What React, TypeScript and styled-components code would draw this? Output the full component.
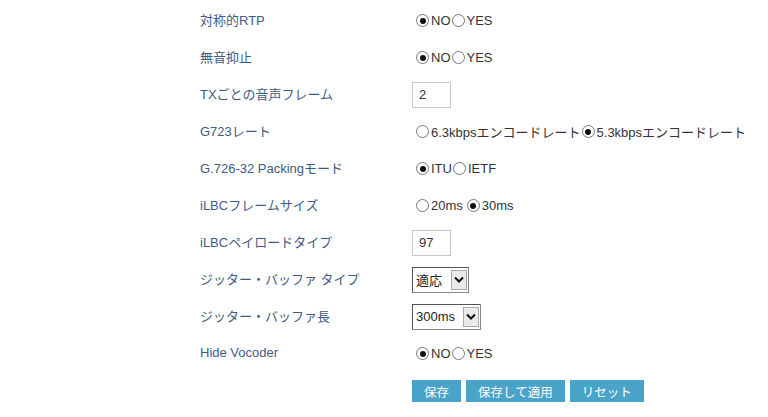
import React, { useState } from "react";
import styled, { createGlobalStyle } from "styled-components";

const GlobalStyle = createGlobalStyle`
  html, body {
    margin: 0;
    padding: 0;
    background: #fff;
  }
  body {
    font-family: "Liberation Sans", Arial, "Noto Sans CJK JP", sans-serif;
    font-size: 13px;
    color: #333;
  }
`;

type Field =
  | { label: string; kind: "radio"; options: string[]; value: number; spaced?: boolean }
  | { label: string; kind: "text"; value: string }
  | { label: string; kind: "select"; options: string[]; value: string; width: number };

const fields: Field[] = [
  { label: "対称的RTP", kind: "radio", options: ["NO", "YES"], value: 0 },
  { label: "無音抑止", kind: "radio", options: ["NO", "YES"], value: 0 },
  { label: "TXごとの音声フレーム", kind: "text", value: "2" },
  { label: "G723レート", kind: "radio", options: ["6.3kbpsエンコードレート", "5.3kbpsエンコードレート"], value: 1 },
  { label: "G.726-32 Packingモード", kind: "radio", options: ["ITU", "IETF"], value: 0 },
  { label: "iLBCフレームサイズ", kind: "radio", options: ["20ms", "30ms"], value: 1, spaced: true },
  { label: "iLBCペイロードタイプ", kind: "text", value: "97" },
  { label: "ジッター・バッファ タイプ", kind: "select", options: ["適応", "固定"], value: "適応", width: 57 },
  { label: "ジッター・バッファ長", kind: "select", options: ["300ms", "200ms", "100ms"], value: "300ms", width: 69 },
  { label: "Hide Vocoder", kind: "radio", options: ["NO", "YES"], value: 0 },
];

const Page = styled.div`
  padding: 2px 0 0 200px;
`;

const Form = styled.div`
  display: grid;
  grid-template-columns: 212px auto;
  grid-auto-rows: 37px;
  align-items: center;
`;

const Label = styled.div`
  color: #3f5b82;
  font-size: 13px;
  white-space: nowrap;
  margin-top: -2px;
`;

const Control = styled.div`
  display: flex;
  align-items: center;
`;

const RadioGroup = styled.div<{ $spaced?: boolean }>`
  display: flex;
  align-items: center;
  gap: ${(p) => (p.$spaced ? "4px" : "1px")};
  padding-left: 4px;
`;

const RadioItem = styled.label`
  display: flex;
  align-items: center;
  gap: 2px;
  cursor: pointer;
  color: #333;
  white-space: nowrap;
`;

const RadioCircle = styled.span<{ $checked: boolean }>`
  width: 11px;
  height: 11px;
  border: 1px solid #777;
  border-radius: 50%;
  display: inline-flex;
  align-items: center;
  justify-content: center;
  box-sizing: content-box;
  background: #fff;

  &::after {
    content: "";
    width: 6px;
    height: 6px;
    border-radius: 50%;
    background: ${(p) => (p.$checked ? "#111" : "transparent")};
  }
`;

const TextBox = styled.input`
  width: 39px;
  height: 26px;
  box-sizing: border-box;
  border: 1px solid #c8c8c8;
  padding: 0 6px;
  font-family: "Liberation Sans", Arial, sans-serif;
  font-size: 13px;
  color: #333;
  outline: none;
`;

const SelectBox = styled.div<{ $w: number }>`
  width: ${(p) => p.$w}px;
  height: 26px;
  box-sizing: border-box;
  border: 1px solid #888;
  border-top-color: #555;
  border-left-color: #555;
  display: flex;
  align-items: center;
  justify-content: space-between;
  padding: 0 1px 0 3px;
  background: #fff;
  font-size: 13px;
  color: #222;
`;

const Arrow = styled.span`
  width: 16px;
  height: 20px;
  box-sizing: border-box;
  border: 1px solid #aaa;
  background: #eaeaea;
  display: flex;
  align-items: center;
  justify-content: center;
`;

const Buttons = styled.div`
  display: flex;
  gap: 5px;
  padding: 8px 0 0 212px;
`;

const Button = styled.button`
  height: 22px;
  border: none;
  background: #4aa3c8;
  color: #fff;
  font-family: "Noto Sans CJK JP", "Liberation Sans", sans-serif;
  font-size: 12.5px;
  padding: 0 12px;
  cursor: pointer;
`;

export default function App() {
  const [values, setValues] = useState(fields.map((f) => f.value));

  const setAt = (i: number, v: any) =>
    setValues((prev) => prev.map((x, j) => (j === i ? v : x)));

  return (
    <Page>
      <GlobalStyle />
      <Form>
        {fields.map((f, i) => (
          <React.Fragment key={f.label}>
            <Label>{f.label}</Label>
            <Control>
              {f.kind === "radio" && (
                <RadioGroup $spaced={f.spaced}>
                  {f.options.map((o, k) => (
                    <RadioItem key={o} onClick={() => setAt(i, k)}>
                      <RadioCircle $checked={values[i] === k} />
                      {o}
                    </RadioItem>
                  ))}
                </RadioGroup>
              )}
              {f.kind === "text" && (
                <TextBox value={values[i] as string} onChange={(e) => setAt(i, e.target.value)} />
              )}
              {f.kind === "select" && (
                <SelectBox $w={f.width}>
                  <span>{values[i]}</span>
                  <Arrow>
                    <svg width="10" height="7" viewBox="0 0 10 7">
                      <path d="M1 1.5 L5 5.5 L9 1.5" fill="none" stroke="#111" strokeWidth="2" />
                    </svg>
                  </Arrow>
                </SelectBox>
              )}
            </Control>
          </React.Fragment>
        ))}
      </Form>
      <Buttons>
        <Button>保存</Button>
        <Button>保存して適用</Button>
        <Button>リセット</Button>
      </Buttons>
    </Page>
  );
}
